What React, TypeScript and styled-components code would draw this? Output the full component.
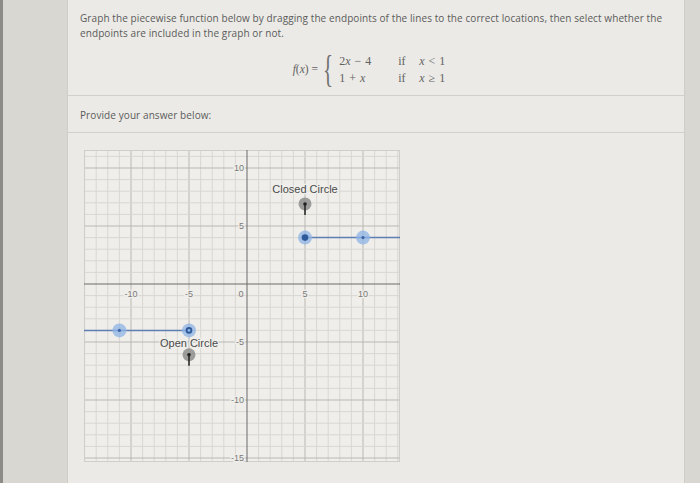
import React from "react";
import styled, { createGlobalStyle } from "styled-components";

const Global = createGlobalStyle`
  html, body { margin: 0; padding: 0; }
  body {
    background: #d9d7d2;
    border-left: 3px solid #8c8b87;
    height: 483px;
    box-sizing: border-box;
    overflow: hidden;
  }
`;

const Page = styled.div`
  display: flex;
  height: 483px;
  padding-left: 64px;
`;

const Panel = styled.div`
  width: 616px;
  background: #ebeae6;
  border-left: 1px solid #cfcdc8;
  border-right: 1px solid #cfcdc8;
  display: flex;
  flex-direction: column;
`;

const Section = styled.div<{ $pad: string; $height?: number; $border?: boolean }>`
  padding: ${(p) => p.$pad};
  ${(p) => (p.$height ? `height: ${p.$height}px;` : "")}
  box-sizing: border-box;
  ${(p) => (p.$border ? "border-bottom: 1px solid #d2d0cb;" : "")}
  display: flex;
  flex-direction: column;
`;

const Question = styled.p`
  margin: 0;
  font-family: "Open Sans", sans-serif;
  font-size: 10px;
  letter-spacing: 0.09px;
  line-height: 15px;
  color: #5b5b5b;
  max-width: 600px;
`;

const FormulaRow = styled.div`
  display: flex;
  justify-content: center;
  align-items: center;
  margin-top: 11px;
  padding-right: 26px;
  font-family: "Liberation Serif", serif;
  color: #626262;
  font-size: 11.5px;
`;

const FName = styled.span`
  margin-right: 3px;
`;

const Brace = styled.span`
  font-size: 38px;
  line-height: 34px;
  transform: scaleX(0.55);
  font-weight: 300;
  color: #707070;
  margin: 0 0 0 -2px;
`;

const Cases = styled.div`
  display: grid;
  grid-template-columns: 59px 21px auto;
  row-gap: 3px;
  font-size: 12px;
  line-height: 14px;
  margin-left: 2px;
`;

const I = styled.i``;

const Op = styled.span<{ $rel?: boolean }>`
  padding: 0 ${(p) => (p.$rel ? "4px" : "4px")};
`;

const Prompt = styled.span`
  font-family: "Open Sans", sans-serif;
  font-size: 10px;
  letter-spacing: 0.09px;
  color: #5b5b5b;
`;

const GraphWrap = styled.div`
  padding: 17px 0 0 16px;
`;

const S = 11.6;
const X0 = 163;
const Y0 = 134;
const W = 316;
const H = 312;

const px = (x: number) => X0 + x * S;
const py = (y: number) => Y0 - y * S;

const labelFont = "Liberation Sans, Arial, sans-serif";

const Graph: React.FC = () => {
  const vs: number[] = [];
  for (let i = -14; i <= 13; i++) vs.push(i);
  const hs: number[] = [];
  for (let j = -15; j <= 11; j++) hs.push(j);
  return (
    <svg width={W} height={H} viewBox={`0 0 ${W} ${H}`} style={{ display: "block" }}>
      <rect x={0} y={0} width={W} height={H} fill="#efeeea" />
      {vs.map((i) =>
        i === 0 ? null : (
          <line
            key={"v" + i}
            x1={px(i)}
            x2={px(i)}
            y1={0}
            y2={H}
            stroke={i % 5 === 0 ? "#b9b8b3" : "#d8d7d2"}
            strokeWidth={1}
          />
        )
      )}
      {hs.map((j) =>
        j === 0 ? null : (
          <line
            key={"h" + j}
            x1={0}
            x2={W}
            y1={py(j)}
            y2={py(j)}
            stroke={j % 5 === 0 ? "#b9b8b3" : "#d8d7d2"}
            strokeWidth={1}
          />
        )
      )}
      <rect x={0.5} y={0.5} width={W - 1} height={H - 1} fill="none" stroke="#cfcec9" />
      <line x1={px(0)} x2={px(0)} y1={0} y2={H} stroke="#6b6b6b" strokeWidth={1} />
      <line x1={0} x2={W} y1={py(0)} y2={py(0)} stroke="#6b6b6b" strokeWidth={1} />

      {[-10, -5, 5, 10].map((x) => (
        <text
          key={"xl" + x}
          x={px(x)}
          y={py(0) + 13}
          textAnchor="middle"
          fontFamily={labelFont}
          fontSize={9}
          fill="#7a7a7a"
          stroke="#efeeea"
          strokeWidth={2.5}
          paintOrder="stroke"
        >
          {x}
        </text>
      ))}
      <text x={px(0) - 6} y={py(0) + 13} textAnchor="middle" fontFamily={labelFont} fontSize={9} fill="#7a7a7a">
        0
      </text>
      {[10, 5, -5, -10, -15].map((y) => (
        <text
          key={"yl" + y}
          x={px(0) - 3}
          y={py(y) + 3}
          textAnchor="end"
          fontFamily={labelFont}
          fontSize={9}
          fill="#7a7a7a"
          stroke="#efeeea"
          strokeWidth={2.5}
          paintOrder="stroke"
        >
          {y}
        </text>
      ))}

      {/* closed-circle piece */}
      <line x1={px(5)} x2={W} y1={py(4)} y2={py(4)} stroke="#5d7fb4" strokeWidth={1.5} />
      <circle cx={px(5)} cy={py(4)} r={7} fill="#8fb3e6" opacity={0.75} />
      <circle cx={px(5)} cy={py(4)} r={3.3} fill="#2f5a9a" />
      <circle cx={px(10)} cy={py(4)} r={7} fill="#8fb3e6" opacity={0.75} />
      <circle cx={px(10)} cy={py(4)} r={1.6} fill="#3d66a6" />

      {/* open-circle piece */}
      <line x1={0} x2={px(-5)} y1={py(-4)} y2={py(-4)} stroke="#5d7fb4" strokeWidth={1.5} />
      <circle cx={px(-11)} cy={py(-4)} r={7} fill="#8fb3e6" opacity={0.75} />
      <circle cx={px(-11)} cy={py(-4)} r={1.6} fill="#3d66a6" />
      <circle cx={px(-5)} cy={py(-4)} r={7} fill="#8fb3e6" opacity={0.75} />
      <circle cx={px(-5)} cy={py(-4)} r={3.3} fill="#2f5a9a" />
      <circle cx={px(-5)} cy={py(-4)} r={1.4} fill="#8fb3e6" />

      {/* pins */}
      <text
        x={px(5)}
        y={py(6.9) - 11}
        textAnchor="middle"
        fontFamily={labelFont}
        fontSize={11}
        fill="#4a4a4a"
        stroke="#efeeea"
        strokeWidth={2.5}
        paintOrder="stroke"
      >
        Closed Circle
      </text>
      <circle cx={px(5)} cy={py(6.9)} r={6.5} fill="#8d8d8d" opacity={0.85} />
      <line x1={px(5)} x2={px(5)} y1={py(6.9)} y2={py(6.9) + 11} stroke="#222" strokeWidth={1.5} />
      <circle cx={px(5)} cy={py(6.9)} r={1.8} fill="#222" />

      <text
        x={px(-5)}
        y={py(-4) + 17}
        textAnchor="middle"
        fontFamily={labelFont}
        fontSize={11}
        fill="#4a4a4a"
        stroke="#efeeea"
        strokeWidth={2.5}
        paintOrder="stroke"
      >
        Open Circle
      </text>
      <circle cx={px(-5)} cy={py(-6.1)} r={6.5} fill="#8d8d8d" opacity={0.85} />
      <line x1={px(-5)} x2={px(-5)} y1={py(-6.1)} y2={py(-6.1) + 11} stroke="#222" strokeWidth={1.5} />
      <circle cx={px(-5)} cy={py(-6.1)} r={1.8} fill="#222" />
    </svg>
  );
};

export default function App() {
  return (
    <>
      <Global />
      <Page>
        <Panel>
          <Section $pad="11px 0 0 12px" $height={96} $border>
            <Question>
              Graph the piecewise function below by dragging the endpoints of the lines to the correct
              locations, then select whether the endpoints are included in the graph or not.
            </Question>
            <FormulaRow>
              <FName>
                <I>f</I>(<I>x</I>) =
              </FName>
              <Brace>{"{"}</Brace>
              <Cases>
                <span>
                  2<I>x</I>
                  <Op>−</Op>4
                </span>
                <span>if</span>
                <span>
                  <I>x</I>
                  <Op $rel>&lt;</Op>1
                </span>
                <span>
                  1<Op>+</Op>
                  <I>x</I>
                </span>
                <span>if</span>
                <span>
                  <I>x</I>
                  <Op $rel>≥</Op>1
                </span>
              </Cases>
            </FormulaRow>
          </Section>
          <Section $pad="12px 0 0 12px" $height={37} $border>
            <Prompt>Provide your answer below:</Prompt>
          </Section>
          <GraphWrap>
            <Graph />
          </GraphWrap>
        </Panel>
      </Page>
    </>
  );
}
